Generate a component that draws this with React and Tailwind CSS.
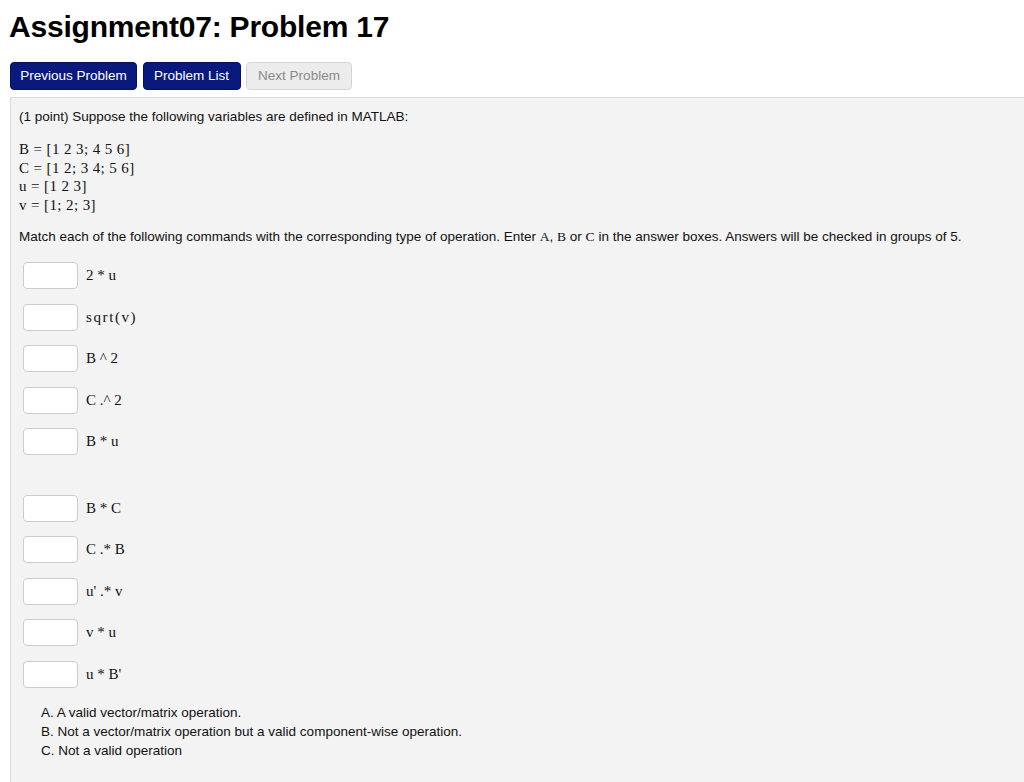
import React from 'react';

const Var = ({ children }) => <span className="font-['Liberation_Serif',serif]">{children}</span>;

const groupOne = [
  ['2', ' * ', 'u'],
  ['sqrt(v)'],
  ['B', ' ^ ', '2'],
  ['C', ' .^ ', '2'],
  ['B', ' * ', 'u'],
];

const groupTwo = [
  ['B', ' * ', 'C'],
  ['C', ' .* ', 'B'],
  ["u'", ' .* ', 'v'],
  ['v', ' * ', 'u'],
  ['u', ' * ', "B'"],
];

const Cmd = ({ parts }) => {
  if (parts.length === 1) {
    return (
      <span className="text-[15px] tracking-[1.6px] font-['Liberation_Serif',serif]">{parts[0]}</span>
    );
  }
  const [a, op, b] = parts;
  return (
    <span className="text-[15px] font-['Liberation_Serif',serif] whitespace-pre">
      {a}
      {op}
      {b}
    </span>
  );
};

const AnswerRow = ({ parts }) => (
  <div className="flex items-center h-[27px] mb-[14.5px]">
    <div className="w-[55px] h-[27px] bg-white border border-[#cccccc] rounded-[4px] mr-[8px]" />
    <Cmd parts={parts} />
  </div>
);

const App = () => {
  return (
    <div className="w-[1024px] h-[782px] overflow-hidden bg-white font-['Liberation_Sans',Arial,sans-serif] text-[#222]">
      <h1 className="pl-[9px] pt-[9px] text-[30px] leading-[35px] font-bold text-black tracking-[-0.2px]">
        Assignment07: Problem 17
      </h1>

      <div className="flex gap-[5.5px] pl-[10px] mt-[18px]">
        <button className="w-[127px] h-[28px] rounded-[4px] bg-[#0a1a7c] border border-[#05105e] text-white text-[13.5px]">
          Previous Problem
        </button>
        <button className="w-[98px] h-[28px] rounded-[4px] bg-[#0a1a7c] border border-[#05105e] text-white text-[13.5px]">
          Problem List
        </button>
        <button className="w-[106px] h-[28px] rounded-[4px] bg-[#ececec] border border-[#d6d6d6] text-[#8a8a8a] text-[13.5px]">
          Next Problem
        </button>
      </div>

      <div className="ml-[10px] mt-[7px] w-[1030px] h-[700px] bg-[#f3f3f3] border border-[#dcdcdc] pl-[8px] pt-[10px] text-[13.5px] text-[#111]">
        <p className="leading-[18px]">(1 point) Suppose the following variables are defined in MATLAB:</p>

        <div className="mt-[14px] text-[15px] tracking-[0.4px] font-['Liberation_Serif',serif]">
          <div className="h-[18.5px] leading-[18.5px]">B = [1 2 3; 4 5 6]</div>
          <div className="h-[18.5px] leading-[18.5px]">C = [1 2; 3 4; 5 6]</div>
          <div className="h-[18.5px] leading-[18.5px]">u = [1 2 3]</div>
          <div className="h-[18.5px] leading-[18.5px]">v = [1; 2; 3]</div>
        </div>

        <p className="mt-[14px] h-[18px] leading-[18px]">
          Match each of the following commands with the corresponding type of operation. Enter{' '}
          <Var>A</Var>, <Var>B</Var> or <Var>C</Var> in the answer boxes. Answers will be checked in groups of 5.
        </p>

        <div className="mt-[16px] pl-[4px]">
          {groupOne.map((p, i) => (
            <AnswerRow key={i} parts={p} />
          ))}
          <div className="h-[25px]" />
          {groupTwo.map((p, i) => (
            <AnswerRow key={i} parts={p} />
          ))}
        </div>

        <ul className="pl-[22px] mt-[15px] leading-[19px]">
          <li>A. A valid vector/matrix operation.</li>
          <li>B. Not a vector/matrix operation but a valid component-wise operation.</li>
          <li>C. Not a valid operation</li>
        </ul>
      </div>
    </div>
  );
};

export default App;
